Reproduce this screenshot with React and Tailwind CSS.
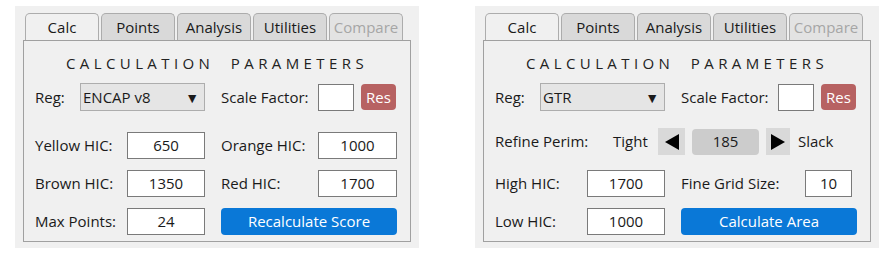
import React from 'react';

const font = { fontFamily: '"Open Sans", "Noto Sans", sans-serif' };

const tabs = ['Calc', 'Points', 'Analysis', 'Utilities', 'Compare'];

const Field = ({ value, w = 'w-[78px]' }) => (
  <div
    className={`${w} h-[27px] bg-white border border-[#7a7a7a] flex items-center justify-center text-[15px] text-[#1a1a1a]`}
  >
    {value}
  </div>
);

const BlueButton = ({ children }) => (
  <div className="w-[176px] h-[27px] rounded-[4px] bg-[#0a78d7] text-white text-[15px] flex items-center justify-center">
    {children}
  </div>
);

const Triangle = ({ dir }) => (
  <svg width="16" height="18" viewBox="0 0 16 18">
    {dir === 'left' ? <polygon points="15,1 15,17 1,9" fill="#000" /> : <polygon points="1,1 1,17 15,9" fill="#000" />}
  </svg>
);

const Panel = ({ reg, rows }) => (
  <div className="w-[404px] bg-[#f0f0f0] pt-[7px] pb-[6px] pl-[8px] pr-[8px]" style={font}>
    <div className="flex gap-[2px] pl-[2px]">
      {tabs.map((t, i) => (
        <div
          key={t}
          className={`w-[74px] h-[27px] rounded-t-[5px] border border-b-0 border-[#acacac] flex items-center justify-center text-[15px] ${
            i === 0 ? 'bg-[#f0f0f0] text-[#1a1a1a]' : i === 4 ? 'bg-[#e3e3e3] text-[#a6a6a6]' : 'bg-[#d9d9d9] text-[#1a1a1a]'
          }`}
        >
          {t}
        </div>
      ))}
    </div>
    <div className="w-[388px] h-[202px] border border-[#a0a0a0] text-[#1a1a1a] text-[15px]">
      <div className="mt-[12px] h-[20px] leading-[20px] text-center tracking-[4.4px] text-[15px] text-[#222]">
        CALCULATION&nbsp; PARAMETERS
      </div>
      <div className="mt-[10px] flex items-center pl-[11px] h-[28px]">
        <div className="w-[45px]">Reg:</div>
        <div className="w-[125px] h-[28px] bg-[#e5e5e5] border border-[#adadad] flex items-center justify-between pl-[2px] pr-[5px]">
          <span>{reg}</span>
          <span className="text-[14px]">▼</span>
        </div>
        <div className="ml-[16px] w-[97px]">Scale Factor:</div>
        <Field value="" w="w-[36px]" />
        <div className="ml-[7px] w-[35px] h-[26px] rounded-[4px] bg-[#b76262] text-white flex items-center justify-center">
          Res
        </div>
      </div>
      {rows}
    </div>
  </div>
);

const Row = ({ className, children }) => (
  <div className={`flex items-center pl-[11px] h-[27px] ${className}`}>{children}</div>
);

const leftRows = (
  <>
    <Row className="mt-[21px]">
      <div className="w-[92px]">Yellow HIC:</div>
      <Field value="650" />
      <div className="ml-[16px] w-[97px]">Orange HIC:</div>
      <Field value="1000" w="w-[79px]" />
    </Row>
    <Row className="mt-[11px]">
      <div className="w-[92px]">Brown HIC:</div>
      <Field value="1350" />
      <div className="ml-[16px] w-[97px]">Red HIC:</div>
      <Field value="1700" w="w-[79px]" />
    </Row>
    <Row className="mt-[11px]">
      <div className="w-[92px]">Max Points:</div>
      <Field value="24" />
      <div className="ml-[16px]">
        <BlueButton>Recalculate Score</BlueButton>
      </div>
    </Row>
  </>
);

const rightRows = (
  <>
    <Row className="mt-[17px]">
      <div className="w-[118px]">Refine Perim:</div>
      <div className="w-[45px]">Tight</div>
      <div className="w-[27px] h-[27px] bg-[#d9d9d9] flex items-center justify-center">
        <Triangle dir="left" />
      </div>
      <div className="ml-[7px] w-[67px] h-[26px] rounded-[4px] bg-[#cccccc] flex items-center justify-center">185</div>
      <div className="ml-[7px] w-[24px] h-[27px] bg-[#d9d9d9] flex items-center justify-center">
        <Triangle dir="right" />
      </div>
      <div className="ml-[8px]">Slack</div>
    </Row>
    <Row className="mt-[15px]">
      <div className="w-[92px]">High HIC:</div>
      <Field value="1700" />
      <div className="ml-[16px] w-[124px]">Fine Grid Size:</div>
      <Field value="10" w="w-[47px]" />
    </Row>
    <Row className="mt-[11px]">
      <div className="w-[92px]">Low HIC:</div>
      <Field value="1000" />
      <div className="ml-[16px]">
        <BlueButton>Calculate Area</BlueButton>
      </div>
    </Row>
  </>
);

export default function App() {
  return (
    <div className="w-[891px] h-[257px] bg-white flex items-start pt-[6px] pl-[15px]">
      <Panel reg="ENCAP v8" rows={leftRows} />
      <div className="ml-[56px]">
        <Panel reg="GTR" rows={rightRows} />
      </div>
    </div>
  );
}
